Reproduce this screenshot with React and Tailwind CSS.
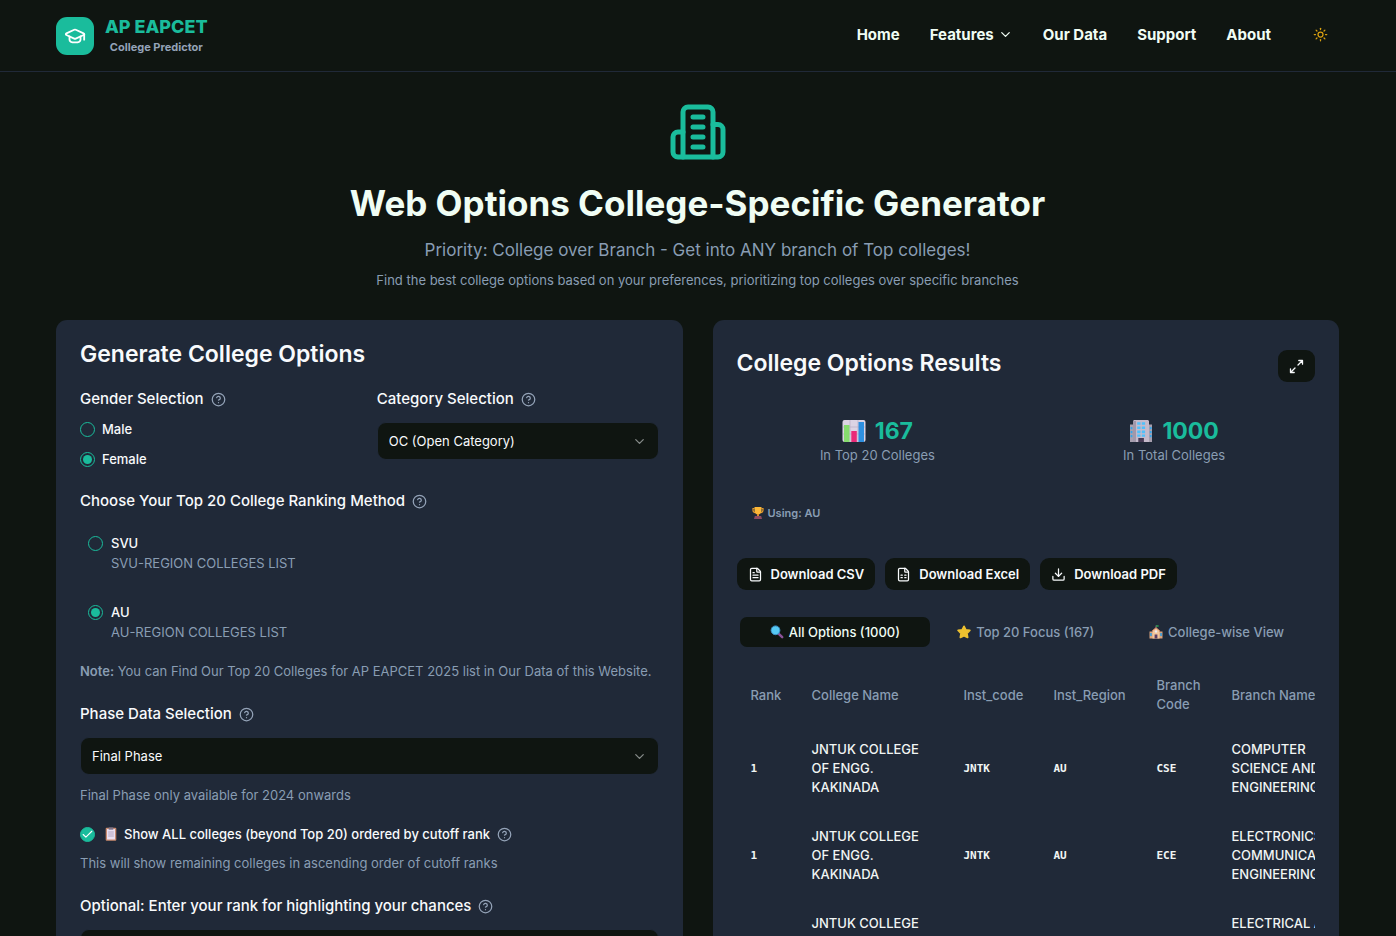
import React, { useState } from 'react';
import { GraduationCap, ChevronDown, Sun, CircleHelp, FileText, FileSpreadsheet, Download, Check } from 'lucide-react';

const navLinks = ['Our Data', 'Support', 'About'];

const rankingMethods = [
    { id: 'svu', name: 'SVU', description: 'SVU-REGION COLLEGES LIST' },
    { id: 'au', name: 'AU', description: 'AU-REGION COLLEGES LIST' },
];

const columns = [
    { name: 'Rank', width: 'w-[61px]' },
    { name: 'College Name', width: 'w-[152px]' },
    { name: 'Inst_code', width: 'w-[90px]' },
    { name: 'Inst_Region', width: 'w-[103px]' },
    { name: 'Branch Code', width: 'w-[75px]' },
    { name: 'Branch Name', width: 'w-[155px]' },
];

const results = [
    { rank: 1, college: 'JNTUK COLLEGE OF ENGG. KAKINADA', code: 'JNTK', region: 'AU', branch: 'CSE', branchName: 'COMPUTER SCIENCE AND ENGINEERING' },
    { rank: 1, college: 'JNTUK COLLEGE OF ENGG. KAKINADA', code: 'JNTK', region: 'AU', branch: 'ECE', branchName: 'ELECTRONICS AND COMMUNICATION ENGINEERING' },
    { rank: 1, college: 'JNTUK COLLEGE OF ENGG. KAKINADA', code: 'JNTK', region: 'AU', branch: 'EEE', branchName: 'ELECTRICAL AND ELECTRONICS ENGINEERING' },
];

const radioClass = "appearance-none shrink-0 grid place-content-center size-[15px] rounded-full border border-[#1abc9c] checked:before:content-[''] checked:before:size-[9px] checked:before:rounded-full checked:before:bg-[#1abc9c]";

const BuildingIcon = () => (
    <svg viewBox="0 0 24 24" className="size-[60px] text-[#1abc9c]" fill="none" stroke="currentColor" strokeWidth="2" strokeLinecap="round" strokeLinejoin="round" aria-hidden="true">
        <path d="M6 22V4a2 2 0 0 1 2-2h8a2 2 0 0 1 2 2v18Z" />
        <path d="M6 12H4a2 2 0 0 0-2 2v6a2 2 0 0 0 2 2h2" />
        <path d="M18 9h2a2 2 0 0 1 2 2v9a2 2 0 0 1-2 2h-2" />
        <path d="M10 6h4M10 10h4M10 14h4M10 18h4" />
    </svg>
);

const ExpandIcon = () => (
    <svg viewBox="0 0 15 15" className="size-[15px]" fill="none" stroke="currentColor" strokeWidth="1.3" strokeLinecap="round" strokeLinejoin="round" aria-hidden="true">
        <path d="M9.8 1.5h3.7v3.7M13.5 1.5L9 6M5.2 13.5H1.5V9.8M1.5 13.5L6 9" />
    </svg>
);

const ChartEmoji = () => (
    <svg viewBox="0 0 24 24" className="size-6" aria-hidden="true">
        <rect x="0.5" y="1" width="23" height="22" rx="2" fill="#dcd3e4" />
        <path d="M8 1v22M16 1v22M1 8h22M1 15h22" stroke="#b9aec6" strokeWidth="0.7" />
        <rect x="2" y="6" width="5.5" height="17" fill="#86db6e" />
        <rect x="9.3" y="12" width="5.5" height="11" fill="#ea2a78" />
        <rect x="16.5" y="3" width="5.5" height="20" fill="#2e8fe0" />
    </svg>
);

const OfficeEmoji = () => (
    <svg viewBox="0 0 24 24" className="size-6" aria-hidden="true">
        <path d="M1 5.5h5V23H1zM18 5.5h5V23h-5z" fill="#a79fae" />
        <path d="M4 2l1-1h14l1 1v21H4z" fill="#c5bacb" />
        <path d="M4 2h3v21H4z" fill="#a198aa" />
        <path d="M8.2 3.2h3.3v2.6H8.2zM12.8 3.2h3.3v2.6h-3.3zM8.2 7.4h3.3V10H8.2zM12.8 7.4h3.3V10h-3.3zM8.2 11.6h3.3v2.6H8.2zM12.8 11.6h3.3v2.6h-3.3zM8.2 15.6h3.3v2.2H8.2zM12.8 15.6h3.3v2.2h-3.3z" fill="#4fc0fb" />
        <path d="M1.6 8h1.8v2.2H1.6zM1.6 12h1.8v2.2H1.6zM1.6 16h1.8v2.2H1.6zM20.8 8h1.8v2.2h-1.8zM20.8 12h1.8v2.2h-1.8zM20.8 16h1.8v2.2h-1.8z" fill="#35a5e8" />
        <path d="M9.3 19h5.6v4H9.3z" fill="#483b55" />
    </svg>
);

const TrophyEmoji = () => (
    <svg viewBox="0 0 12 14" className="h-[14px] w-3" aria-hidden="true">
        <path d="M2.5 2.5H1v1.7c0 1.4 1 2.2 2.4 2.4M9.5 2.5H11v1.7c0 1.4-1 2.2-2.4 2.4" fill="none" stroke="#e39a2e" strokeWidth="1.2" />
        <path d="M2.5 1h7v3.5c0 2.4-1.5 4-3.5 4s-3.5-1.6-3.5-4z" fill="#fcb737" />
        <path d="M5 8h2v2.5H5z" fill="#df8a2c" />
        <path d="M2.8 10h6.4l.8 3H2z" fill="#8d4a61" />
    </svg>
);

const SearchEmoji = () => (
    <svg viewBox="0 0 14 14" className="size-[14px]" aria-hidden="true">
        <path d="M8.8 8.8l3.4 3.4" stroke="#8b5297" strokeWidth="2.5" strokeLinecap="round" />
        <circle cx="5.5" cy="5.3" r="4.4" fill="#56c9f3" stroke="#3d8fc4" strokeWidth="1" />
    </svg>
);

const StarEmoji = () => (
    <svg viewBox="0 0 14 14" className="size-[14px]" aria-hidden="true">
        <path d="M7 1.4l1.8 3.4 4 .6-2.9 2.9.7 4.1L7 10.6l-3.6 1.8.7-4.1-2.9-2.9 4-.6z" fill="#eec12f" stroke="#eec12f" strokeWidth="1.8" strokeLinejoin="round" />
    </svg>
);

const SchoolEmoji = () => (
    <svg viewBox="0 0 14 14" className="size-[14px]" aria-hidden="true">
        <path d="M7 3V.5" stroke="#8a8f98" strokeWidth="0.7" />
        <path d="M7 .4h2.6v1.2H7z" fill="#2fb457" />
        <path d="M.5 6.5h13v7H.5z" fill="#d9a27c" />
        <path d="M3.5 5.5L7 2.8l3.5 2.7v8h-7z" fill="#f3c69c" />
        <path d="M2.9 6L7 2.6 11.1 6" fill="none" stroke="#c9785c" strokeWidth="0.9" />
        <path d="M1 8h1.9v3H1zM11.1 8H13v3h-1.9z" fill="#4b9fd2" />
        <circle cx="7" cy="6.5" r="1.2" fill="#eeeaf2" />
        <path d="M5.6 9.5h2.8v4H5.6z" fill="#5a3d63" />
    </svg>
);

const ClipboardEmoji = () => (
    <svg viewBox="0 0 12 14" className="h-[14px] w-3" aria-hidden="true">
        <rect x="0.7" y="0.7" width="10.6" height="13" rx="1" fill="#c98a6e" />
        <path d="M2 2h8v10.5H2z" fill="#eadff0" />
        <path d="M3.7 .4h4.6v2.3H3.7z" fill="#7f7488" />
        <path d="M3.2 5h5.6M3.2 7h5.6M3.2 9h5.6" stroke="#a596b4" strokeWidth="0.8" />
    </svg>
);

const FieldTitle = ({ children, htmlFor }) => (
    <div className="flex h-[22px] items-center gap-[7px]">
        {htmlFor
            ? <label htmlFor={htmlFor} className="text-[15px] font-medium text-[#f8fafc]">{children}</label>
            : <span className="text-[15px] font-medium text-[#f8fafc]">{children}</span>}
        <CircleHelp className="size-[15px] text-[#94a3b8]" />
    </div>
);

const SelectBox = ({ id, options }) => (
    <div className="mt-3 grid items-center">
        <select id={id} className="col-start-1 row-start-1 h-[38px] w-full appearance-none rounded-[9px] border border-[#202938] bg-[#0f1511] px-[11px] text-[13px] text-[#f8fafc]">
            {options.map(option => <option key={option}>{option}</option>)}
        </select>
        <ChevronDown className="pointer-events-none col-start-1 row-start-1 mr-3 size-[15px] justify-self-end text-[#868b89]" />
    </div>
);

const App = () => {
    const [gender, setGender] = useState('Female');
    const [method, setMethod] = useState('au');
    const [showAll, setShowAll] = useState(true);
    const [activeTab, setActiveTab] = useState('all');

    const tabs = [
        { id: 'all', label: 'All Options (1000)', icon: <SearchEmoji /> },
        { id: 'top', label: 'Top 20 Focus (167)', icon: <StarEmoji /> },
        { id: 'college', label: 'College-wise View', icon: <SchoolEmoji /> },
    ];

    return (
        <div className="min-h-screen bg-[#0f1511] font-['Inter',sans-serif] text-[13px] leading-5 text-[#899db3]">
            <header className="border-b border-[#202938] pl-14 pr-[57px]">
                <div className="flex h-[71px] items-center justify-between">
                    <a href="#" className="flex items-center gap-[11px]">
                        <span className="flex size-[38px] items-center justify-center rounded-[11px] bg-[#1abc9c] text-white">
                            <GraduationCap className="size-[22px]" />
                        </span>
                        <span className="flex flex-col items-center">
                            <span className="text-[18px] font-extrabold leading-[22px] text-[#1abc9c]">AP EAPCET</span>
                            <span className="text-[11px] font-bold leading-[18px] text-[#94a3b8]">College Predictor</span>
                        </span>
                    </a>
                    <nav className="flex items-center gap-[30px] pb-[2px] text-[15px] font-bold text-[#f0fdf4]">
                        <a href="#">Home</a>
                        <button type="button" className="flex items-center gap-1">
                            Features
                            <ChevronDown className="size-[15px]" />
                        </button>
                        {navLinks.map(link => <a key={link} href="#">{link}</a>)}
                        <button type="button" aria-label="Toggle theme" className="flex size-[38px] items-center justify-center">
                            <Sun className="size-[15px] text-[#d9a010]" />
                        </button>
                    </nav>
                </div>
            </header>

            <main className="pb-10 pl-14 pr-[57px]">
                <div className="flex flex-col items-center pt-[30px] text-center">
                    <BuildingIcon />
                    <h1 className="mt-[22px] text-[35px] font-bold leading-[38px] text-[#f0fdf4]">Web Options College-Specific Generator</h1>
                    <p className="mt-[14px] text-[17px] leading-7">Priority: College over Branch - Get into ANY branch of Top colleges!</p>
                    <p className="mt-[6px]">Find the best college options based on your preferences, prioritizing top colleges over specific branches</p>
                </div>

                <div className="mt-[30px] grid grid-cols-2 gap-[30px]">
                    {/* Options form */}
                    <form className="rounded-[11px] bg-[#202938] px-6 pb-6 pt-4">
                        <h2 className="text-[23px] font-semibold leading-9 text-[#f8fafc]">Generate College Options</h2>

                        <div className="mt-4 grid grid-cols-2 gap-[15px]">
                            <div>
                                <FieldTitle>Gender Selection</FieldTitle>
                                <div className="mt-[9px] flex flex-col gap-[10px]">
                                    {['Male', 'Female'].map(item => (
                                        <label key={item} className="flex items-center gap-[7px] font-medium text-[#f8fafc]">
                                            <input type="radio" name="gender" checked={gender === item} onChange={() => setGender(item)} className={radioClass} />
                                            {item}
                                        </label>
                                    ))}
                                </div>
                            </div>
                            <div>
                                <FieldTitle htmlFor="category">Category Selection</FieldTitle>
                                <SelectBox id="category" options={['OC (Open Category)']} />
                            </div>
                        </div>

                        <div className="mt-[21px]">
                            <FieldTitle>Choose Your Top 20 College Ranking Method</FieldTitle>
                            <div className="mt-[13px] flex flex-col gap-[13px]">
                                {rankingMethods.map(item => (
                                    <label key={item.id} className="grid grid-cols-[15px_1fr] items-center gap-x-2 p-2">
                                        <input type="radio" name="method" checked={method === item.id} onChange={() => setMethod(item.id)} className={radioClass} />
                                        <span className="font-medium text-[#f8fafc]">{item.name}</span>
                                        <span className="col-start-2">{item.description}</span>
                                    </label>
                                ))}
                            </div>
                            <p className="mt-[11px]"><strong className="font-semibold">Note:</strong> You can Find Our Top 20 Colleges for AP EAPCET 2025 list in Our Data of this Website.</p>
                        </div>

                        <div className="mt-[22px]">
                            <FieldTitle htmlFor="phase">Phase Data Selection</FieldTitle>
                            <SelectBox id="phase" options={['Final Phase']} />
                            <p className="mt-[10px]">Final Phase only available for 2024 onwards</p>
                        </div>

                        <div className="mt-[19px]">
                            <div className="flex items-center gap-[7px]">
                                <label className="flex items-center gap-[10px] font-medium text-[#f8fafc]">
                                    <span className="grid size-[15px] place-items-center">
                                        <input type="checkbox" checked={showAll} onChange={() => setShowAll(!showAll)} className="col-start-1 row-start-1 size-[15px] appearance-none rounded-full border border-[#1abc9c] checked:bg-[#1abc9c]" />
                                        {showAll && <Check className="pointer-events-none col-start-1 row-start-1 size-[13px] text-white" />}
                                    </span>
                                    <span className="flex items-center gap-[7px]"><ClipboardEmoji /> Show ALL colleges (beyond Top 20) ordered by cutoff rank</span>
                                </label>
                                <CircleHelp className="size-[15px] text-[#94a3b8]" />
                            </div>
                            <p className="mt-[9px]">This will show remaining colleges in ascending order of cutoff ranks</p>
                        </div>

                        <div className="mt-[22px]">
                            <FieldTitle htmlFor="rank">Optional: Enter your rank for highlighting your chances</FieldTitle>
                            <input id="rank" type="text" className="mt-3 h-[38px] w-full rounded-[9px] border border-[#202938] bg-[#0f1511] px-[11px] text-[#f8fafc]" />
                        </div>
                    </form>

                    {/* Results */}
                    <section className="min-w-0 rounded-[11px] bg-[#202938] px-6 pb-6 pt-[30px]">
                        <div className="flex items-start justify-between">
                            <h2 className="text-[23px] font-semibold leading-[26px] text-[#f8fafc]">College Options Results</h2>
                            <button type="button" aria-label="Expand results" className="flex h-8 w-[37px] items-center justify-center rounded-[9px] bg-[#0f1511] text-[#f8fafc]">
                                <ExpandIcon />
                            </button>
                        </div>

                        <div className="mt-[35px] grid grid-cols-2 gap-[15px] text-center">
                            <div>
                                <div className="flex items-center justify-center gap-[9px] text-[23px] font-bold leading-7 text-[#1abc9c]"><ChartEmoji /> 167</div>
                                <div>In Top 20 Colleges</div>
                            </div>
                            <div>
                                <div className="flex items-center justify-center gap-[9px] text-[23px] font-bold leading-7 text-[#1abc9c]"><OfficeEmoji /> 1000</div>
                                <div>In Total Colleges</div>
                            </div>
                        </div>

                        <div className="mt-10 flex items-center gap-1 pl-[15px] text-[11px] font-semibold leading-4">
                            <TrophyEmoji /> Using: AU
                        </div>

                        <div className="mt-[37px] flex gap-[10px] font-semibold text-[#f8fafc]">
                            <button type="button" className="flex h-8 items-center gap-2 rounded-[9px] bg-[#0f1511] px-[11px]"><FileText className="size-[15px]" /> Download CSV</button>
                            <button type="button" className="flex h-8 items-center gap-2 rounded-[9px] bg-[#0f1511] px-[11px]"><FileSpreadsheet className="size-[15px]" /> Download Excel</button>
                            <button type="button" className="flex h-8 items-center gap-2 rounded-[9px] bg-[#0f1511] px-[11px]"><Download className="size-[15px]" /> Download PDF</button>
                        </div>

                        <div role="tablist" className="mt-6 grid grid-cols-3 p-[3px]">
                            {tabs.map(tab => (
                                <button
                                    key={tab.id}
                                    type="button"
                                    role="tab"
                                    aria-selected={activeTab === tab.id}
                                    onClick={() => setActiveTab(tab.id)}
                                    className={`flex h-[30px] items-center justify-center gap-[5px] rounded-[7px] font-medium ${activeTab === tab.id ? 'bg-[#0f1511] text-[#f0fdf4]' : ''}`}
                                >
                                    {tab.icon} {tab.label}
                                </button>
                            ))}
                        </div>

                        <div className="mt-[15px] overflow-x-auto">
                            <table className="w-[636px] table-fixed text-left leading-[19px]">
                                <thead>
                                    <tr className="h-[60px]">
                                        {columns.map(column => (
                                            <th key={column.name} className={`px-[14px] font-medium ${column.width}`}>{column.name}</th>
                                        ))}
                                    </tr>
                                </thead>
                                <tbody className="font-medium text-[#f1f5f4]">
                                    {results.map((row, index) => (
                                        <tr key={index}>
                                            <td className="px-[14px] py-[15px] font-['DejaVu_Sans_Mono',monospace] text-[11px] font-bold">{row.rank}</td>
                                            <td className="px-[14px] py-[15px]">{row.college}</td>
                                            <td className="px-[14px] py-[15px] font-['DejaVu_Sans_Mono',monospace] text-[11px] font-bold">{row.code}</td>
                                            <td className="px-[14px] py-[15px] font-['DejaVu_Sans_Mono',monospace] text-[11px] font-bold">{row.region}</td>
                                            <td className="px-[14px] py-[15px] font-['DejaVu_Sans_Mono',monospace] text-[11px] font-bold">{row.branch}</td>
                                            <td className="px-[14px] py-[15px]">{row.branchName}</td>
                                        </tr>
                                    ))}
                                </tbody>
                            </table>
                        </div>
                    </section>
                </div>
            </main>
        </div>
    );
};

export default App;
